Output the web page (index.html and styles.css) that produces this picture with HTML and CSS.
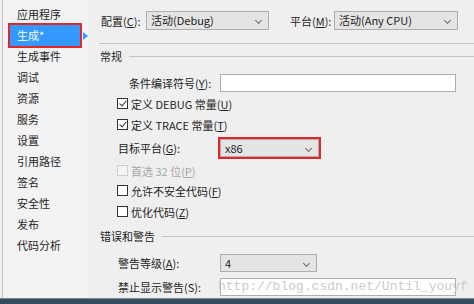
FILE: index.html
```html
<!DOCTYPE html>
<html lang="zh-CN">
<head>
    <meta charset="UTF-8">
    <title>项目属性 - 生成</title>
    <link rel="stylesheet" href="styles.css">
</head>
<body>
    <div class="window">
        <!-- Tabs -->
        <nav class="sidebar">
            <ul class="tabs">
                <li>应用程序</li>
                <li class="active">生成*</li>
                <li>生成事件</li>
                <li>调试</li>
                <li>资源</li>
                <li>服务</li>
                <li>设置</li>
                <li>引用路径</li>
                <li>签名</li>
                <li>安全性</li>
                <li>发布</li>
                <li>代码分析</li>
            </ul>
        </nav>

        <!-- Build page -->
        <main class="page">
            <div class="toolbar">
                <label class="bar-label">配置(<u>C</u>):</label>
                <div class="select select-config">活动(Debug)<span class="chevron"></span></div>
                <label class="bar-label bar-label-platform">平台(<u>M</u>):</label>
                <div class="select select-platform">活动(Any CPU)<span class="chevron"></span></div>
            </div>

            <section class="group">
                <h3 class="group-title">常规</h3>
                <div class="row">
                    <label class="field-label indent-wide">条件编译符号(<u>Y</u>):</label>
                    <div class="textbox"></div>
                </div>
                <div class="row row-check">
                    <span class="check checked"></span>定义 DEBUG 常量(<u>U</u>)
                </div>
                <div class="row row-check">
                    <span class="check checked"></span>定义 TRACE 常量(<u>T</u>)
                </div>
                <div class="row row-tall">
                    <label class="field-label">目标平台(<u>G</u>):</label>
                    <div class="select select-small marked">x86<span class="chevron"></span></div>
                </div>
                <div class="row row-check row-short disabled">
                    <span class="check"></span>首选 32 位(<u>P</u>)
                </div>
                <div class="row row-check">
                    <span class="check"></span>允许不安全代码(<u>F</u>)
                </div>
                <div class="row row-check">
                    <span class="check"></span>优化代码(<u>Z</u>)
                </div>
            </section>

            <section class="group group-errors">
                <h3 class="group-title">错误和警告</h3>
                <div class="row row-wide">
                    <label class="field-label">警告等级(<u>A</u>):</label>
                    <div class="select select-small">4<span class="chevron"></span></div>
                </div>
                <div class="row row-wide">
                    <label class="field-label">禁止显示警告(S):</label>
                    <div class="textbox"></div>
                </div>
            </section>
        </main>

        <div class="watermark">http://blog.csdn.net/Until_youyf</div>
    </div>
    <div class="statusbar"></div>
</body>
</html>
```
FILE: styles.css
```css
/* Base Reset */
* {
    margin: 0;
    padding: 0;
    box-sizing: border-box;
}

body {
    width: 474px;
    height: 304px;
    overflow: hidden;
    font-family: "Noto Sans CJK SC", "Noto Sans", sans-serif;
    font-size: 11px;
    color: #1e1e1e;
    background-color: #efefef;
}

u {
    text-decoration: underline;
    text-underline-offset: 1px;
}

.window {
    position: relative;
    height: 298px;
    display: flex;
    padding-left: 2px;
}

/* Sidebar tabs */
.sidebar {
    width: 86px;
    border-left: 1px solid #c4c4c4;
    background-color: #f3f3f3;
}

.tabs {
    list-style: none;
    padding-top: 4px;
}

.tabs li {
    position: relative;
    height: 21px;
    line-height: 21px;
    width: 70px;
    margin-left: 7px;
    padding-left: 7px;
    white-space: nowrap;
}

.tabs li.active {
    background-color: #3399ff;
    color: #fff;
    outline: 2px solid #e3262c;
}

.tabs li.active::after {
    content: "";
    position: absolute;
    right: -8px;
    top: 7px;
    border-top: 4px solid transparent;
    border-bottom: 4px solid transparent;
    border-left: 5px solid #3399ff;
}

/* Page */
.page {
    flex: 1;
    padding-left: 11px;
}

.toolbar {
    display: flex;
    align-items: center;
    height: 44px;
    padding-bottom: 2px;
    border-bottom: 1px solid #c2c2c2;
}

.bar-label {
    width: 47px;
    padding-left: 2px;
}

.bar-label-platform {
    width: 44px;
    margin-left: 21px;
    padding-left: 0;
}

.select {
    position: relative;
    height: 19px;
    line-height: 17px;
    padding-left: 4px;
    border: 1px solid #adadad;
    background-color: #e4e4e4;
}

.select-config {
    width: 123px;
}

.select-platform {
    width: 124px;
}

.select-small {
    width: 97px;
    height: 18px;
    line-height: 16px;
}

.select.marked {
    width: 99px;
    outline: 2px solid #e3262c;
}

.chevron {
    position: absolute;
    right: 7px;
    top: 6px;
    width: 5px;
    height: 5px;
    border-right: 1px solid #6a6a6a;
    border-bottom: 1px solid #6a6a6a;
    transform: rotate(45deg);
}

/* Groups */
.group-title {
    display: flex;
    align-items: center;
    height: 22px;
    margin-top: 1px;
    padding-left: 1px;
    font-size: 11px;
    font-weight: normal;
}

.group-title::after {
    content: "";
    flex: 1;
    margin-left: 7px;
    border-top: 1px solid #c2c2c2;
}

.group > .row:first-of-type {
    margin-top: 5px;
}

.row {
    display: flex;
    align-items: center;
    height: 21px;
}

.row-check {
    padding-left: 18px;
}

.row-tall {
    height: 26px;
}

.row-short {
    height: 19px;
}

.row-wide {
    height: 24px;
}

.group-errors {
    margin-top: 3px;
}

.group-errors > .row:first-of-type {
    margin-top: 4px;
}

.field-label {
    width: 121px;
    padding-left: 19px;
}

.indent-wide {
    padding-left: 30px;
}

.textbox {
    width: 236px;
    height: 18px;
    border: 1px solid #adadad;
    background-color: #fff;
}

/* Checkboxes */
.check {
    position: relative;
    width: 11px;
    height: 11px;
    margin-right: 3px;
    border: 1px solid #333;
    background-color: #fff;
}

.check.checked::after {
    content: "";
    position: absolute;
    left: 3px;
    top: 0;
    width: 3px;
    height: 6px;
    border-right: 1px solid #333;
    border-bottom: 1px solid #333;
    transform: rotate(40deg);
}

.disabled {
    color: #a6a6a6;
}

.disabled .check {
    border-color: #cfcfcf;
    background-color: #f4f4f4;
}

/* Watermark over the last textbox */
.watermark {
    position: absolute;
    left: 218px;
    top: 279px;
    font-family: "Liberation Mono", monospace;
    font-size: 13px;
    color: #cbcbcb;
    white-space: nowrap;
}

.statusbar {
    height: 6px;
    border-top: 1px solid #7a8797;
    background-color: #384a60;
}
```
